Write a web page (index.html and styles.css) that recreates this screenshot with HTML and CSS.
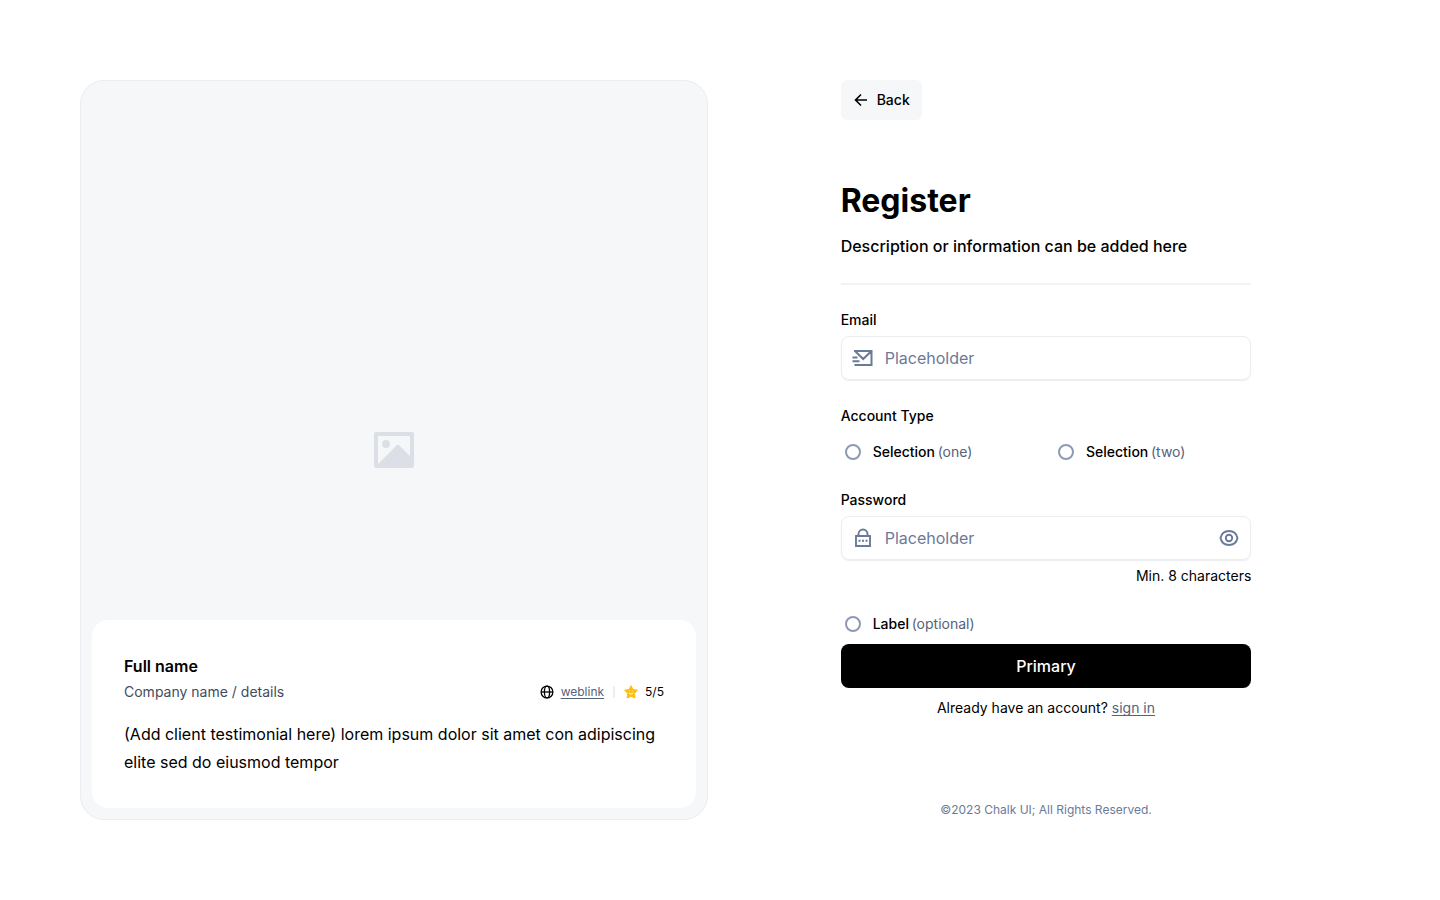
FILE: index.html
```html
<!DOCTYPE html>
<html lang="en">
<head>
    <meta charset="utf-8">
    <meta name="viewport" content="width=device-width, initial-scale=1">
    <title>Register</title>
    <link rel="stylesheet" href="styles.css">
</head>
<body>
    <main class="page">
        <section class="showcase">
            <svg class="image-icon" width="40" height="36" viewBox="0 0 40 36" fill="currentColor" aria-hidden="true">
                <path fill-rule="evenodd" d="M2 0h36a2 2 0 0 1 2 2v32a2 2 0 0 1-2 2H2a2 2 0 0 1-2-2V2a2 2 0 0 1 2-2zm2 4v28l18.500-18.500a2 2 0 0 1 2.900 0L36 24V4z"/>
                <circle cx="12" cy="12" r="4"/>
            </svg>
            <article class="testimonial">
                <h2 class="name">Full name</h2>
                <div class="details">
                    <span class="company">Company name / details</span>
                    <div class="meta">
                        <svg width="14" height="14" viewBox="0 0 14 14" fill="none" stroke="currentColor" stroke-width="1.300" aria-hidden="true">
                            <circle cx="7" cy="7" r="5.900"/>
                            <ellipse cx="7" cy="7" rx="2.600" ry="5.900"/>
                            <path d="M1 7h12"/>
                        </svg>
                        <a href="#" class="link">weblink</a>
                        <span class="separator"></span>
                        <svg width="14" height="14" viewBox="0 0 14 14" aria-hidden="true">
                            <path fill="#fdbf12" stroke="#fdbf12" stroke-width="1" stroke-linejoin="round" d="M7 .700l2 3.800 4.400.700-3.100 3.200.700 4.600L7 11.200 3 13l.700-4.600L.600 5.200 5 4.500z"/>
                            <path fill="none" stroke="#fff" stroke-width=".900" d="M5 7.800c.700 1.700 3.300 1.700 4 0"/>
                            <path fill="none" stroke="#fff" stroke-width=".700" d="M5 6h.800M8.200 6H9"/>
                        </svg>
                        <span class="rating">5/5</span>
                    </div>
                </div>
                <p class="quote">(Add client testimonial here) lorem ipsum dolor sit amet con adipiscing elite sed do eiusmod tempor</p>
            </article>
        </section>

        <section class="register">
            <button type="button" class="back">
                <svg width="16" height="16" viewBox="0 0 16 16" fill="none" stroke="currentColor" stroke-width="1.600" aria-hidden="true">
                    <path d="M14 8H3M8 2.500L2.500 8 8 13.500"/>
                </svg>
                Back
            </button>

            <header class="heading">
                <h1>Register</h1>
                <p>Description or information can be added here</p>
            </header>

            <form class="form">
                <div class="field">
                    <label for="email">Email</label>
                    <div class="input-box">
                        <svg width="24" height="24" viewBox="0 0 24 24" fill="none" stroke="currentColor" stroke-width="2" aria-hidden="true">
                            <path d="M20.500 5v14M3.500 19h18M3 5h18.500M4 5l8.200 8 8.300-8M1.500 11.500h5M1.500 15.300h7"/>
                        </svg>
                        <input type="email" id="email" placeholder="Placeholder">
                    </div>
                </div>

                <fieldset class="account">
                    <legend>Account Type</legend>
                    <div class="options">
                        <label class="option"><input type="radio" name="account" value="one"><span>Selection <small>(one)</small></span></label>
                        <label class="option"><input type="radio" name="account" value="two"><span>Selection <small>(two)</small></span></label>
                    </div>
                </fieldset>

                <div class="field">
                    <label for="password">Password</label>
                    <div class="input-box">
                        <svg width="24" height="24" viewBox="0 0 24 24" fill="none" stroke="currentColor" stroke-width="1.900" aria-hidden="true">
                            <path d="M5 10h14v10H5zM7.500 10V8a4.500 4.500 0 0 1 9 0v2"/>
                            <path d="M7.500 14.700h2M11 14.700h2M14.500 14.700h2"/>
                        </svg>
                        <input type="password" id="password" placeholder="Placeholder">
                        <button type="button" class="reveal" aria-label="Show password">
                            <svg width="24" height="24" viewBox="0 0 24 24" fill="none" stroke="currentColor" stroke-width="1.900" aria-hidden="true">
                                <path d="M3.500 12C4.500 7.500 8 5 12 5s7.500 2.500 8.500 7c-1 4.500-4.500 7-8.500 7s-7.500-2.500-8.500-7z"/>
                                <circle cx="12" cy="12" r="3.200"/>
                            </svg>
                        </button>
                    </div>
                    <p class="hint">Min. 8 characters</p>
                </div>

                <label class="option"><input type="checkbox" name="label"><span>Label <small>(optional)</small></span></label>
                <button type="submit" class="primary">Primary</button>
                <p class="signin">Already have an account? <a href="#" class="link">sign in</a></p>
            </form>

            <footer class="copyright">©2023 Chalk UI; All Rights Reserved.</footer>
        </section>
    </main>
</body>
</html>
```

FILE: styles.css
```css
* {
    box-sizing: border-box;
}
body {
    margin: 0;
    font-family: Inter, sans-serif;
    font-size: 14px;
    line-height: 20px;
    color: #000;
    background: #fff;
}
h1, h2, p {
    margin: 0;
}
svg {
    flex: none;
}
button, input {
    font: inherit;
}
.page {
    display: grid;
    grid-template-columns: repeat(12, 1fr);
    gap: 24px;
    min-height: 100vh;
    padding: 80px;
}

/* left panel */
.showcase {
    grid-column: 1 / 7;
    display: grid;
    padding: 11px;
    background: #f6f7f9;
    border: 1px solid #ebedf1;
    border-radius: 24px;
}
.image-icon {
    grid-area: 1 / 1;
    place-self: center;
    color: #dcdfe6;
}
.testimonial {
    grid-area: 1 / 1;
    align-self: end;
    padding: 32px;
    background: #fff;
    border-radius: 16px;
}
.name {
    font-size: 16px;
    font-weight: 600;
    line-height: 28px;
}
.details {
    display: flex;
    justify-content: space-between;
    align-items: center;
    margin-bottom: 16px;
    line-height: 24px;
}
.company {
    color: #434b5c;
}
.meta {
    display: flex;
    align-items: center;
    gap: 7px;
    font-size: 12px;
    line-height: 16px;
}
.link {
    color: #56627a;
    text-decoration: underline 1px;
    text-decoration-skip-ink: none;
    text-underline-offset: 2px;
}
.separator {
    width: 2px;
    height: 12px;
    margin: 0 2px;
    background: #ebedf1;
}
.quote {
    font-size: 16px;
    line-height: 28px;
}

/* right column */
.register {
    grid-column: 8 / 12;
    display: flex;
    flex-direction: column;
}
.back {
    display: flex;
    align-items: center;
    align-self: flex-start;
    gap: 8px;
    height: 40px;
    padding: 0 12px;
    font-weight: 500;
    color: #000;
    background: #f6f7f9;
    border: 0;
    border-radius: 6px;
}
.heading {
    margin: 61px 0 25px;
    padding-bottom: 25px;
    border-bottom: 2px solid #f2f3f6;
}
.heading h1 {
    margin-bottom: 13px;
    font-size: 32px;
    font-weight: 700;
    line-height: 40px;
}
.heading p {
    font-size: 16px;
    font-weight: 500;
    line-height: 24px;
}
.form, .field {
    display: flex;
    flex-direction: column;
}
.field label, .account legend {
    margin-bottom: 6px;
    font-weight: 500;
}
.input-box {
    display: flex;
    align-items: center;
    gap: 10px;
    height: 44px;
    padding: 0 9px;
    color: #6b7a99;
    border: 1px solid #ebedf1;
    border-radius: 8px;
    box-shadow: 0 1px 1px rgba(100, 110, 140, 0.12);
}
.input-box input {
    flex: 1;
    min-width: 0;
    padding: 0;
    font-size: 16px;
    color: #000;
    background: none;
    border: 0;
    outline: 0;
}
.input-box input::placeholder {
    color: #6b7a99;
    opacity: 1;
}
.reveal {
    display: flex;
    padding: 0;
    color: inherit;
    background: none;
    border: 0;
}
.account {
    min-width: 0;
    margin: 26px 0;
    padding: 0;
    border: 0;
}
.account legend {
    margin-bottom: 14px;
    padding: 0;
}
.options {
    display: grid;
    grid-template-columns: 1fr 1fr;
    gap: 16px;
}
.option {
    display: flex;
    align-items: center;
    gap: 12px;
    height: 24px;
    padding-left: 4px;
    font-weight: 500;
}
.option small {
    margin-left: -1px;
    font-size: 14px;
    font-weight: 400;
    color: #56627a;
}
.option input {
    appearance: none;
    width: 16px;
    height: 16px;
    margin: 0;
    border: 2px solid #8e9ab3;
    border-radius: 50%;
}
.option input:checked {
    border: 5px solid #000;
}
.hint {
    margin: 6px 0 26px;
    text-align: right;
}
.primary {
    height: 44px;
    margin: 8px 0 10px;
    font-size: 16px;
    font-weight: 500;
    color: #fff;
    background: #000;
    border: 0;
    border-radius: 8px;
}
.signin {
    text-align: center;
}
.copyright {
    margin-top: auto;
    font-size: 12px;
    text-align: center;
    color: #6b7a99;
}
```
